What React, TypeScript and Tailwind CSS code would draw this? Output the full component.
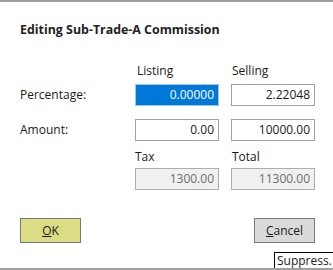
import React from 'react';

const FONT = "font-['Segoe_UI','Open_Sans','Noto_Sans',sans-serif]";

function Field({ value, selected, readOnly }: { value: string; selected?: boolean; readOnly?: boolean }) {
  const cls = selected
    ? 'border-[#99c9ef] bg-[#0078d7] text-white'
    : readOnly
      ? 'border-[#acacac] bg-[#f0f0f0] text-[#6d6d6d]'
      : 'border-[#a0a0a0] bg-white text-[#1a1a1a]';
  return (
    <div className={`w-[84px] h-[22px] border flex items-center justify-end pr-[4px] leading-none ${cls}`}>
      {value}
    </div>
  );
}

export default function App() {
  return (
    <div className={`relative w-[333px] h-[270px] overflow-hidden bg-white border-t-2 border-[#a0a0a0] text-[12px] text-[#1a1a1a] ${FONT}`}>
      <div className="pl-[20px]">
        <h1 className="mt-[20px] h-4 leading-4 text-[12.4px] font-bold text-[#222]">Editing Sub-Trade-A Commission</h1>

        {/* column headers */}
        <div className="mt-[25px] h-4 leading-4 flex">
          <div className="w-[115px]" />
          <div className="w-[96px] pl-[2px]">Listing</div>
          <div className="pl-[1px]">Selling</div>
        </div>

        <div className="mt-[5px] flex items-center">
          <div className="w-[115px]">Percentage:</div>
          <div className="flex gap-[12px]">
            <Field value="0.00000" selected />
            <Field value="2.22048" />
          </div>
        </div>

        <div className="mt-[13px] flex items-center">
          <div className="w-[115px]">Amount:</div>
          <div className="flex gap-[12px]">
            <Field value="0.00" />
            <Field value="10000.00" />
          </div>
        </div>

        <div className="mt-[8px] h-4 leading-4 flex">
          <div className="w-[115px]" />
          <div className="w-[96px]">Tax</div>
          <div className="pl-[1px]">Total</div>
        </div>

        <div className="mt-[3px] flex">
          <div className="w-[115px]" />
          <div className="flex gap-[12px]">
            <Field value="1300.00" readOnly />
            <Field value="11300.00" readOnly />
          </div>
        </div>

        {/* buttons */}
        <div className="mt-[28px] flex justify-between pr-[18px]">
          <button className="w-[61px] h-[25px] border border-[#7a7a7a] bg-[#dcdc84] flex items-center justify-center leading-none">
            <span><span className="underline">O</span>K</span>
          </button>
          <button className="w-[61px] h-[25px] border border-[#7a7a7a] bg-[#dadada] flex items-center justify-center leading-none">
            <span><span className="underline">C</span>ancel</span>
          </button>
        </div>
      </div>

      {/* tooltip */}
      <div className="absolute left-[274px] top-[250px] h-[17px] pl-[2px] pr-[20px] border border-black bg-white whitespace-nowrap leading-[15px]">
        Suppress.
      </div>
      <div className="absolute left-0 right-0 bottom-0 h-[2px] bg-[#a0a0a0]" />
    </div>
  );
}
